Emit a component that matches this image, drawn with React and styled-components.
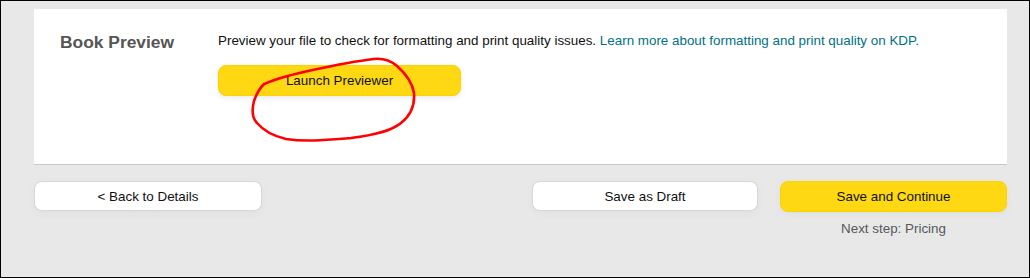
import React from 'react';
import styled, { createGlobalStyle } from 'styled-components';

const GlobalStyle = createGlobalStyle`
    html, body {
        margin: 0;
        padding: 0;
        background: #e8e8e8;
    }
    body {
        font-family: "Liberation Sans", Arial, sans-serif;
        color: #0f1111;
    }
`;

const Frame = styled.main`
    box-sizing: border-box;
    width: 1030px;
    height: 278px;
    border: 1px solid #000;
    background: #e8e8e8;
    padding: 8px 22px 0 33px;
`;

const Card = styled.section`
    position: relative;
    background: #fff;
    border-bottom: 1px solid #c8c8c8;
    height: 156px;
    display: flex;
    padding: 23px 0 0 26px;
    box-sizing: border-box;
`;

const Title = styled.h2`
    margin: 0;
    width: 158px;
    flex: none;
    font-size: 17.4px;
    font-weight: bold;
    color: #555;
    line-height: 20px;
`;

const Body = styled.div`
    display: flex;
    flex-direction: column;
    align-items: flex-start;
    gap: 16px;
`;

const Text = styled.p`
    margin: 0;
    font-size: 13.4px;
    line-height: 17px;
    color: #0f1111;
`;

const LinkText = styled.a`
    color: #007185;
    text-decoration: none;
`;

const Button = styled.button`
    box-sizing: border-box;
    width: ${p => p.$w}px;
    height: ${p => p.$h || 30}px;
    border-radius: 8px;
    border: 1px solid ${p => (p.$primary ? '#fcd200' : '#d5d9d9')};
    background: ${p => (p.$primary ? '#ffd814' : '#fff')};
    box-shadow: 0 2px 5px rgba(213, 217, 217, 0.5);
    font-family: inherit;
    font-size: 13.4px;
    color: #0f1111;
    cursor: pointer;
    padding: 0;
`;

const Footer = styled.div`
    display: flex;
    align-items: flex-start;
    padding-top: 16px;
`;

const Spacer = styled.div`
    flex: 1;
`;

const ContinueCol = styled.div`
    display: flex;
    flex-direction: column;
    align-items: center;
    margin-left: 22px;
    gap: 9px;
`;

const NextStep = styled.span`
    font-size: 13.4px;
    color: #565959;
`;

const Scribble = styled.svg`
    position: absolute;
    left: -33px;
    top: -8px;
    width: 1030px;
    height: 278px;
    pointer-events: none;
    overflow: visible;
`;

export default function App() {
    return (
        <>
            <GlobalStyle />
            <Frame>
                <Card>
                    <Title>Book Preview</Title>
                    <Body>
                        <Text>
                            Preview your file to check for formatting and print quality issues.{' '}
                            <LinkText href="#">Learn more about formatting and print quality on KDP.</LinkText>
                        </Text>
                        <Button $primary $w={243} $h={31}>Launch Previewer</Button>
                    </Body>
                    {/* red hand-drawn circle around the button */}
                    <Scribble viewBox="0 0 1030 278">
                        <path
                            d="M262 84 C270 79 285 75 307 70 C330 65 355 60 373 58 C383 57 390 60 396 65 C404 72 411 80 413 92 C414 104 410 114 400 122 C390 130 375 134 350 137 C325 139 305 141 285 138 C272 135 262 129 256 122 C250 116 251 108 253 100 C255 94 258 88 263 83"
                            fill="none"
                            stroke="#ff0000"
                            strokeWidth="2.6"
                            strokeLinecap="round"
                            strokeLinejoin="round"
                        />
                    </Scribble>
                </Card>
                <Footer>
                    <Button $w={228} $h={30}>&lt; Back to Details</Button>
                    <Spacer />
                    <Button $w={226} $h={30}>Save as Draft</Button>
                    <ContinueCol>
                        <Button $primary $w={227} $h={31}>Save and Continue</Button>
                        <NextStep>Next step: Pricing</NextStep>
                    </ContinueCol>
                </Footer>
            </Frame>
        </>
    );
}
